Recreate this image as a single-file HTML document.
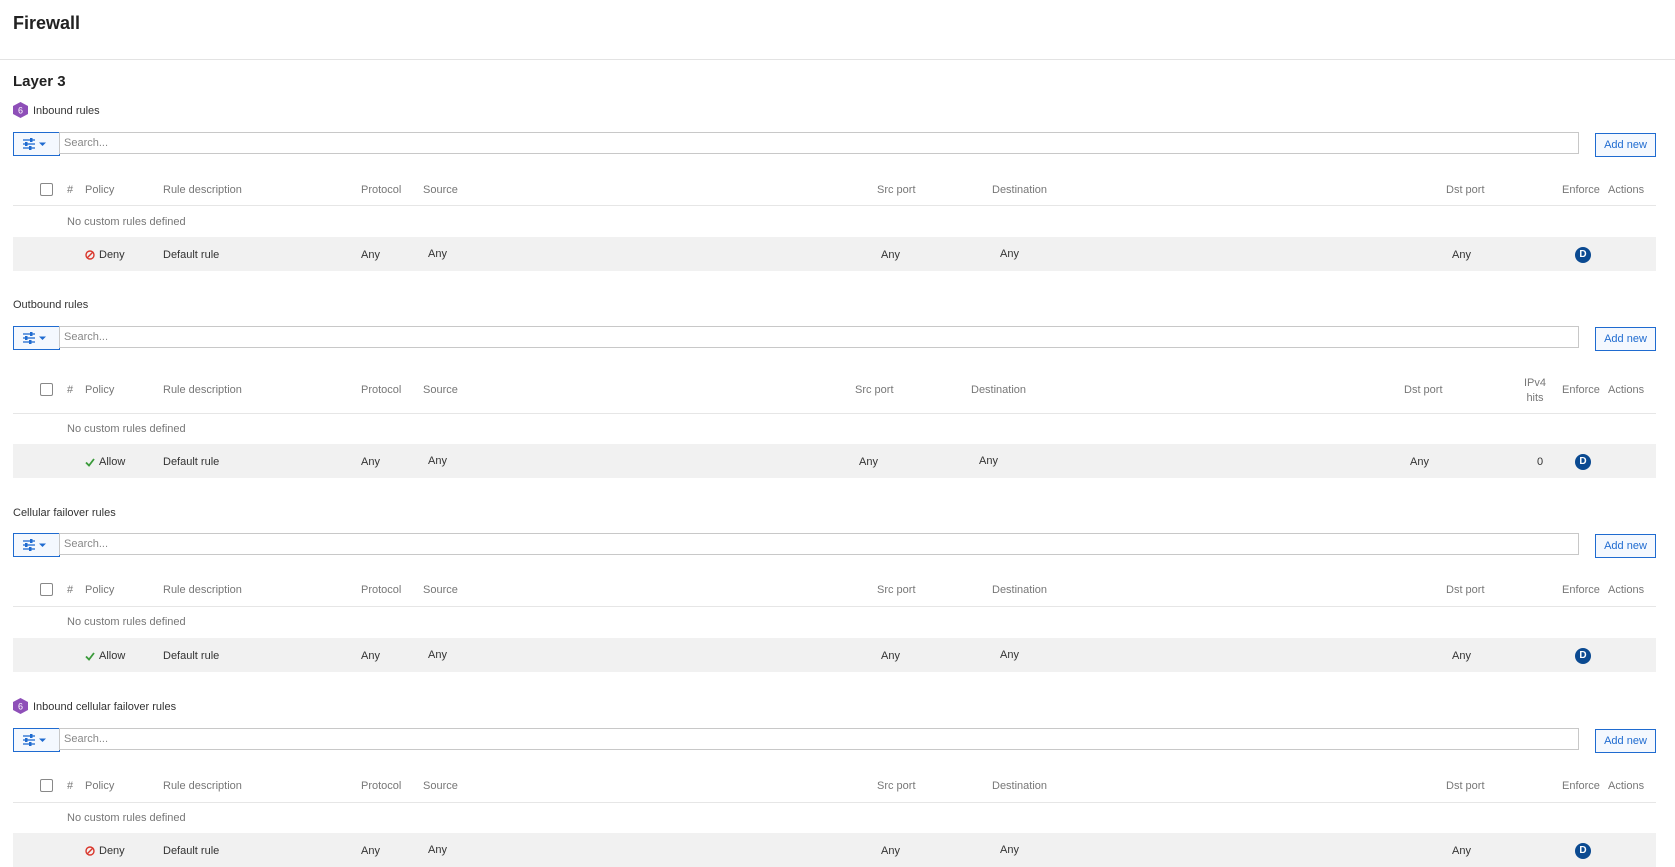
<!DOCTYPE html>
<html><head><meta charset="utf-8"><style>
*{margin:0;padding:0;box-sizing:border-box}
body{width:1675px;height:858px;overflow:hidden;background:#fff;font-family:"Liberation Sans",sans-serif;color:#333;position:relative}
.a{position:absolute;white-space:nowrap}
.t{font-size:11px;line-height:14px;transform:translateY(-6px)}
.h{color:#777}
.sec{position:absolute;left:0;top:0;width:1675px}
.fb{position:absolute;left:13px;width:47px;height:24px;border:1px solid #1f6bd0;background:#f4f8fe}
.sr{position:absolute;left:59px;width:1520px;height:22px;border:1px solid #c8c8c8;font-size:11px;color:#888;padding:4px 4px}
.ad{position:absolute;left:1595px;width:61px;height:24px;border:1px solid #1f6bd0;background:#f4f8fe;color:#1f6bd0;font-size:11px;text-align:center;line-height:22px}
.ln{position:absolute;left:13px;width:1643px;height:1px;background:#e6e6e6}
.gr{position:absolute;left:13px;width:1643px;height:34px;background:#f1f1f1}
.cb{position:absolute;left:40px;width:13px;height:13px;border:1px solid #888;border-radius:2px;background:#fff}
.d{position:absolute;left:1575px;width:16px;height:16px;border-radius:50%;background:#0b4a91;color:#fff;font-size:10px;font-weight:bold;text-align:center;line-height:16px}
.hex{position:absolute;left:13px;width:15px;height:16px}
</style></head><body>
<div class="a" style="left:13px;top:13px;font-size:18px;font-weight:bold;color:#222">Firewall</div>
<div class="a" style="left:0;top:59px;width:1675px;height:1px;background:#e3e3e3"></div>
<div class="a" style="left:13px;top:73px;font-size:15px;font-weight:bold;color:#222">Layer 3</div>

<div class="sec" style="top:110px">
<svg class="hex" style="top:-8px" viewBox="0 0 15 16"><polygon points="7.5,0 15,4 15,12 7.5,16 0,12 0,4" fill="#8e4fb8"/><text x="7.5" y="11.5" font-size="9" fill="#fff" text-anchor="middle" font-family="Liberation Sans">6</text></svg>
<div class="a t" style="left:33px;top:0">Inbound rules</div>
</div>
<div class="sec" style="top:304px"><div class="a t" style="left:13px;top:0">Outbound rules</div></div>
<div class="sec" style="top:512px"><div class="a t" style="left:13px;top:0">Cellular failover rules</div></div>
<div class="sec" style="top:706px">
<svg class="hex" style="top:-8px" viewBox="0 0 15 16"><polygon points="7.5,0 15,4 15,12 7.5,16 0,12 0,4" fill="#8e4fb8"/><text x="7.5" y="11.5" font-size="9" fill="#fff" text-anchor="middle" font-family="Liberation Sans">6</text></svg>
<div class="a t" style="left:33px;top:0">Inbound cellular failover rules</div>
</div>

<div id="tb"></div>
<script>
var S=[
 {tb:132,h:189,b:205,n:221,g:237,p:'deny',src:877,dst:992,dp:1446,ip:false},
 {tb:326,h:389,b:413,n:428,g:444,p:'allow',src:855,dst:971,dp:1404,ip:true},
 {tb:533,h:589,b:606,n:621,g:638,p:'allow',src:877,dst:992,dp:1446,ip:false},
 {tb:728,h:785,b:802,n:817,g:833,p:'deny',src:877,dst:992,dp:1446,ip:false}];
var o='';
function T(x,y,s,c){o+='<div class="a t '+(c||'')+'" style="left:'+x+'px;top:'+y+'px">'+s+'</div>';}
S.forEach(function(s){
 o+='<div class="fb" style="top:'+s.tb+'px"><svg width="45" height="22" viewBox="0 0 45 22"><g stroke="#1f6bd0" stroke-width="1.3"><line x1="9" y1="7" x2="21" y2="7"/><line x1="9" y1="11" x2="21" y2="11"/><line x1="9" y1="15" x2="21" y2="15"/></g><g fill="#1f6bd0"><rect x="16" y="5" width="2.5" height="4"/><rect x="11" y="9" width="2.5" height="4"/><rect x="15" y="13" width="2.5" height="4"/><polygon points="25,9.5 32,9.5 28.5,13"/></g></svg></div>';
 o+='<div class="sr" style="top:'+(s.tb)+'px">Search...</div>';
 o+='<div class="ad" style="top:'+(s.tb+1)+'px">Add new</div>';
 o+='<div class="cb" style="top:'+(s.h-6)+'px"></div>';
 var h=s.h;
 T(67,h,'#','h');T(85,h,'Policy','h');T(163,h,'Rule description','h');T(361,h,'Protocol','h');T(423,h,'Source','h');
 T(s.src,h,'Src port','h');T(s.dst,h,'Destination','h');T(s.dp,h,'Dst port','h');T(1562,h,'Enforce','h');T(1608,h,'Actions','h');
 if(s.ip){o+='<div class="a h" style="left:1515px;top:'+(h-13)+'px;width:40px;text-align:center;font-size:11px;line-height:15px">IPv4<br>hits</div>';}
 o+='<div class="ln" style="top:'+s.b+'px"></div>';
 T(67,s.n,'No custom rules defined','h');
 o+='<div class="gr" style="top:'+s.g+'px"></div>';
 var y=s.g+17;
 if(s.p=='deny'){o+='<svg class="a" style="left:85px;top:'+(y-4)+'px" width="10" height="10" viewBox="0 0 10 10"><circle cx="5" cy="5" r="4" fill="none" stroke="#d9362b" stroke-width="1.4"/><line x1="2.3" y1="7.7" x2="7.7" y2="2.3" stroke="#d9362b" stroke-width="1.4"/></svg>';T(99,y,'Deny');}
 else{o+='<svg class="a" style="left:85px;top:'+(y-4)+'px" width="10" height="10" viewBox="0 0 10 10"><polyline points="1,5.5 4,8.5 9,2" fill="none" stroke="#3a9a3a" stroke-width="1.8"/></svg>';T(99,y,'Allow');}
 T(163,y,'Default rule');T(361,y,'Any');T(428,y-1,'Any');T(s.src+4,y,'Any');T(s.dst+8,y-1,'Any');T(s.dp+6,y,'Any');
 if(s.ip)T(1537,y,'0');
 o+='<div class="d" style="top:'+(y-7)+'px">D</div>';
});
document.getElementById('tb').innerHTML=o;
</script>
</body></html>
